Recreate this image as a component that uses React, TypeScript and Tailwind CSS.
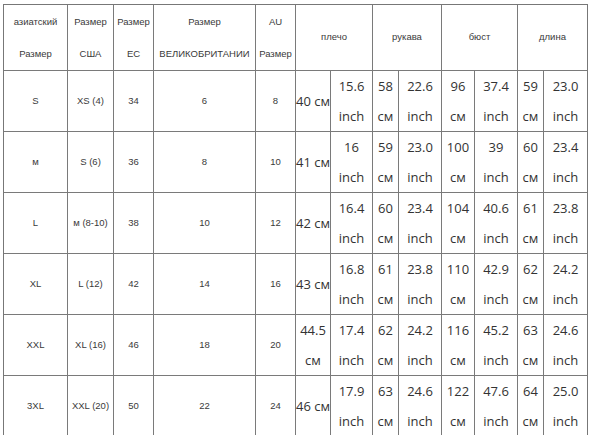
const rows = [
  ["S", "XS (4)", "34", "6", "8", "40 см", "15.6", "58", "22.6", "96", "37.4", "59", "23.0"],
  ["м", "S (6)", "36", "8", "10", "41 см", "16", "59", "23.0", "100", "39", "60", "23.4"],
  ["L", "м (8-10)", "38", "10", "12", "42 см", "16.4", "60", "23.4", "104", "40.6", "61", "23.8"],
  ["XL", "L (12)", "42", "14", "16", "43 см", "16.8", "61", "23.8", "110", "42.9", "62", "24.2"],
  ["XXL", "XL (16)", "46", "18", "20", "44.5 см", "17.4", "62", "24.2", "116", "45.2", "63", "24.6"],
  ["3XL", "XXL (20)", "50", "22", "24", "46 см", "17.9", "63", "24.6", "122", "47.6", "64", "25.0"],
];

const headLeft = [
  ["азиатский", "Размер"],
  ["Размер", "США"],
  ["Размер", "ЕС"],
  ["Размер", "ВЕЛИКОБРИТАНИИ"],
  ["AU", "Размер"],
];

const headRight = ["плечо", "рукава", "бюст", "длина"];

const small = "bg-white flex items-center justify-center text-center text-[9.5px] text-[#3a3a3a] font-['Liberation_Sans',Arial,sans-serif]";
const big = "bg-white flex flex-col items-center justify-center text-center text-[13px] leading-[30px] text-[#333] font-['Open_Sans',sans-serif]";

function ValueCell({ value, unit }: { value: string; unit: string }) {
  return (
    <div className={big}>
      <span className="whitespace-nowrap">{value}</span>
      <span className="whitespace-nowrap">{unit}</span>
    </div>
  );
}

export default function App() {
  return (
    <div className="h-[435px] w-[593px] overflow-hidden bg-white pl-[3px] pt-[4px]">
      <div className="grid w-[585px] grid-cols-[63px_45px_39px_101px_39px_34px_41px_25px_42px_32px_42px_25px_43px] grid-rows-[65px_repeat(6,60px)] gap-px border border-[#777] bg-[#7a7a7a]">
        {headLeft.map((h, i) => (
          <div key={i} className={`${small} flex-col leading-[32px]`}>
            <span className="whitespace-nowrap">{h[0]}</span>
            <span className="whitespace-nowrap">{h[1]}</span>
          </div>
        ))}
        {headRight.map((h) => (
          <div key={h} className={`${small} col-span-2`}>
            {h}
          </div>
        ))}
        {rows.map((r, ri) => (
          <div key={ri} className="contents">
            {r.slice(0, 5).map((c, ci) => (
              <div key={ci} className={small}>
                <span className="whitespace-nowrap">{c}</span>
              </div>
            ))}
            {r[5].startsWith("44.5") ? (
              <ValueCell value="44.5" unit="см" />
            ) : (
              <div className={`${big} items-start`}>
                <span className="whitespace-nowrap">{r[5]}</span>
              </div>
            )}
            <ValueCell value={r[6]} unit="inch" />
            <ValueCell value={r[7]} unit="см" />
            <ValueCell value={r[8]} unit="inch" />
            <ValueCell value={r[9]} unit="см" />
            <ValueCell value={r[10]} unit="inch" />
            <ValueCell value={r[11]} unit="см" />
            <ValueCell value={r[12]} unit="inch" />
          </div>
        ))}
      </div>
    </div>
  );
}
